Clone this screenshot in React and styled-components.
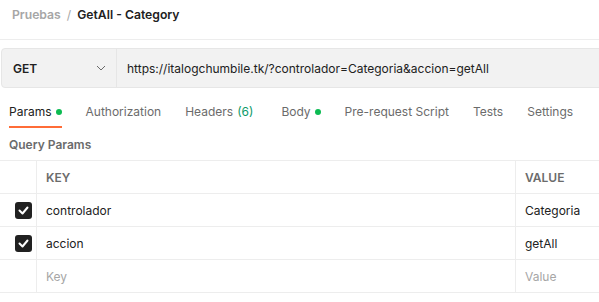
import React from "react";
import styled, { createGlobalStyle } from "styled-components";

const Global = createGlobalStyle`
  html, body { margin: 0; padding: 0; background: #fff; }
  body { font-family: Inter, "Noto Sans", sans-serif; color: #212121; overflow: hidden; }
  * { box-sizing: border-box; }
`;

const Page = styled.div`
  width: 599px;
  height: 302px;
  overflow: hidden;
  display: flex;
  flex-direction: column;
`;

const Breadcrumb = styled.div`
  height: 40px;
  border-bottom: 1px solid #ededed;
  display: flex;
  align-items: center;
  gap: 6px;
  padding: 0 0 10px 12px;
  font-size: 12.2px;
  font-weight: 600;
`;

const Crumb = styled.span`
  color: ${(p) => (p.$muted ? "#a6a6a6" : "#212121")};
  font-weight: ${(p) => (p.$sep ? 400 : 600)};
`;

const RequestBar = styled.div`
  margin: 8px -4px 0 1px;
  height: 40px;
  display: flex;
  background: #f2f2f2;
  border: 1px solid #e6e6e6;
  border-radius: 4px;
`;

const Method = styled.div`
  width: 115px;
  flex: none;
  display: flex;
  align-items: center;
  justify-content: space-between;
  padding: 0 10px 0 11px;
  border-right: 1px solid #e6e6e6;
  font-size: 12px;
  font-weight: 600;
`;

const Url = styled.div`
  display: flex;
  align-items: center;
  padding-left: 10px;
  font-size: 12px;
  color: #212121;
  white-space: nowrap;
`;

const Tabs = styled.div`
  display: flex;
  padding-left: 9px;
  margin-top: 14px;
  height: 26px;
`;

const Tab = styled.div`
  display: flex;
  align-items: flex-start;
  gap: 4px;
  margin-right: ${(p) => p.$mr}px;
  padding-top: 2px;
  font-size: 12px;
  line-height: 16px;
  color: ${(p) => (p.$active ? "#212121" : "#6b6b6b")};
  border-bottom: 2px solid ${(p) => (p.$active ? "#ff6c37" : "transparent")};
  height: 26px;
`;

const Dot = styled.span`
  width: 6px;
  height: 6px;
  border-radius: 50%;
  background: #0cbb52;
  margin-top: 5px;
`;

const Count = styled.span`
  color: #0b9a6a;
`;

const Section = styled.div`
  padding-left: 9px;
  margin-top: 10px;
  height: 22px;
  font-size: 12px;
  font-weight: 600;
  color: #6b6b6b;
  line-height: 14px;
`;

const Table = styled.div`
  border-top: 1px solid #ededed;
  width: 640px;
`;

const Row = styled.div`
  display: grid;
  grid-template-columns: 37px 479px 1fr;
  height: 33px;
  border-bottom: 1px solid #ededed;
`;

const Cell = styled.div`
  display: flex;
  align-items: center;
  padding-left: ${(p) => (p.$box ? 15 : 9)}px;
  border-right: ${(p) => (p.$last ? "none" : "1px solid #ededed")};
  font-size: 12px;
  font-weight: ${(p) => (p.$head ? 600 : 400)};
  color: ${(p) => (p.$head ? "#6b6b6b" : p.$ph ? "#a6a6a6" : "#212121")};
`;

const Check = styled.span`
  width: 17px;
  height: 17px;
  border-radius: 3px;
  background: #212121;
  display: flex;
  align-items: center;
  justify-content: center;
`;

const Chevron = () => (
  <svg width="10" height="6" viewBox="0 0 10 6" fill="none">
    <path d="M1 1l4 4 4-4" stroke="#6b6b6b" strokeWidth="1" />
  </svg>
);

const CheckIcon = () => (
  <svg width="11" height="9" viewBox="0 0 11 9" fill="none">
    <path d="M1.5 4.5l3 3 5-6" stroke="#fff" strokeWidth="2" strokeLinecap="round" strokeLinejoin="round" />
  </svg>
);

const rows = [
  { key: "controlador", value: "Categoria", checked: true },
  { key: "accion", value: "getAll", checked: true },
  { key: "Key", value: "Value", ph: true },
];

export default function App() {
  return (
    <Page>
      <Global />
      <Breadcrumb>
        <Crumb $muted>Pruebas</Crumb>
        <Crumb $muted $sep>/</Crumb>
        <Crumb>GetAll - Category</Crumb>
      </Breadcrumb>
      <RequestBar>
        <Method>
          GET
          <Chevron />
        </Method>
        <Url>https://italogchumbile.tk/?controlador=Categoria&amp;accion=getAll</Url>
      </RequestBar>
      <Tabs>
        <Tab $active $mr={24}>Params<Dot /></Tab>
        <Tab $mr={24}>Authorization</Tab>
        <Tab $mr={28}>Headers <Count>(6)</Count></Tab>
        <Tab $mr={24}>Body<Dot /></Tab>
        <Tab $mr={24}>Pre-request Script</Tab>
        <Tab $mr={24}>Tests</Tab>
        <Tab $mr={0}>Settings</Tab>
      </Tabs>
      <Section>Query Params</Section>
      <Table>
        <Row>
          <Cell $box />
          <Cell $head>KEY</Cell>
          <Cell $head $last>VALUE</Cell>
        </Row>
        {rows.map((r) => (
          <Row key={r.key}>
            <Cell $box>{r.checked && <Check><CheckIcon /></Check>}</Cell>
            <Cell $ph={r.ph}>{r.key}</Cell>
            <Cell $ph={r.ph} $last>{r.value}</Cell>
          </Row>
        ))}
      </Table>
    </Page>
  );
}
